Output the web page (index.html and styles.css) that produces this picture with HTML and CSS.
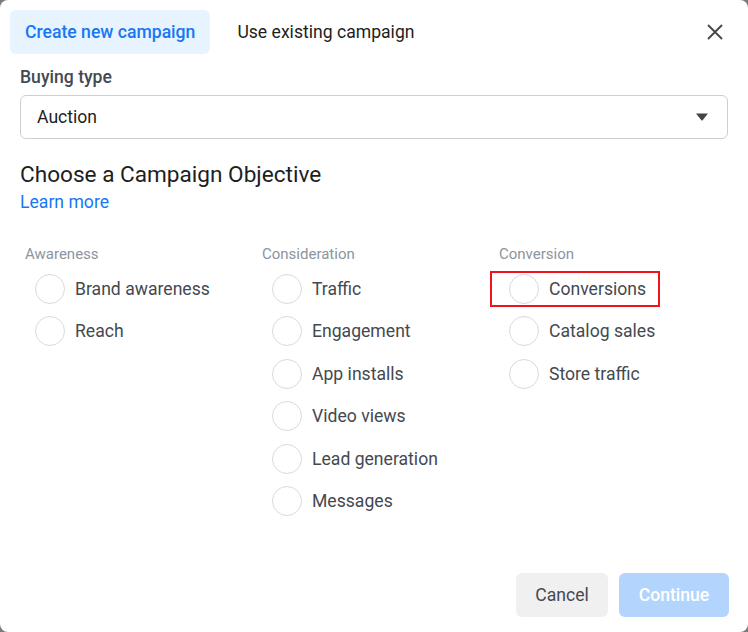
FILE: index.html
```html
<!DOCTYPE html>
<html lang="en">
<head>
    <meta charset="UTF-8">
    <title>Create campaign</title>
    <link rel="stylesheet" href="styles.css">
</head>
<body>
    <div class="dialog">
        <div class="tabs">
            <div class="tab active">Create new campaign</div>
            <div class="tab">Use existing campaign</div>
            <button class="close" aria-label="Close">
                <svg width="16" height="16" viewBox="0 0 16 16"><path d="M1.5 1.5L14.5 14.5M14.5 1.5L1.5 14.5" stroke="#444" stroke-width="1.8" stroke-linecap="round"/></svg>
            </button>
        </div>

        <div class="field-label">Buying type</div>
        <div class="select">
            <span>Auction</span>
            <svg width="12" height="8" viewBox="0 0 12 8"><path d="M0 0.5h12L6.8 7a1 1 0 0 1-1.6 0z" fill="#444"/></svg>
        </div>

        <h2 class="heading">Choose a Campaign Objective</h2>
        <a class="learn" href="#">Learn more</a>

        <div class="objectives">
            <div class="group">
                <div class="group-title">Awareness</div>
                <label class="option"><span class="radio"></span>Brand awareness</label>
                <label class="option"><span class="radio"></span>Reach</label>
            </div>
            <div class="group">
                <div class="group-title">Consideration</div>
                <label class="option"><span class="radio"></span>Traffic</label>
                <label class="option"><span class="radio"></span>Engagement</label>
                <label class="option"><span class="radio"></span>App installs</label>
                <label class="option"><span class="radio"></span>Video views</label>
                <label class="option"><span class="radio"></span>Lead generation</label>
                <label class="option"><span class="radio"></span>Messages</label>
            </div>
            <div class="group">
                <div class="group-title">Conversion</div>
                <label class="option marked"><span class="radio"></span>Conversions</label>
                <label class="option"><span class="radio"></span>Catalog sales</label>
                <label class="option"><span class="radio"></span>Store traffic</label>
            </div>
        </div>

        <div class="footer">
            <button class="btn cancel">Cancel</button>
            <button class="btn continue">Continue</button>
        </div>
    </div>
</body>
</html>
```

FILE: styles.css
```css
body {
    margin: 0;
    background: #7a7a7a;
    font-family: Roboto, "Liberation Sans", sans-serif;
    font-size: 17.6px;
    color: #444950;
}

.dialog {
    width: 748px;
    height: 632px;
    box-sizing: border-box;
    background: #fff;
    border-radius: 8px;
    padding: 10px 20px 0 20px;
    display: flex;
    flex-direction: column;
}

.tabs {
    display: flex;
    align-items: center;
    margin-left: -10px;
    height: 44px;
}

.tab {
    height: 44px;
    line-height: 44px;
    padding: 0 15px;
    color: #1c1e21;
    border-radius: 6px;
}

.tab.active {
    background: #e7f3ff;
    color: #1877f2;
    font-weight: 500;
}

.tab + .tab {
    margin-left: 12px;
}

.close {
    margin-left: auto;
    margin-right: 3px;
    border: 0;
    background: none;
    padding: 0;
    width: 20px;
    height: 20px;
    display: flex;
    align-items: center;
    justify-content: center;
}

.field-label {
    margin-top: 13px;
    font-weight: 500;
    color: #444950;
    line-height: 20px;
}

.select {
    margin-top: 8px;
    height: 44px;
    box-sizing: border-box;
    border: 1px solid #ccd0d5;
    border-radius: 6px;
    display: flex;
    align-items: center;
    justify-content: space-between;
    padding: 0 19px 0 16px;
    color: #1c1e21;
}

.heading {
    margin: 22px 0 0 0;
    font-size: 22.6px;
    font-weight: 400;
    line-height: 28px;
    color: #1c1e21;
}

.learn {
    display: block;
    margin-top: 2px;
    line-height: 22px;
    color: #1877f2;
    text-decoration: none;
}

.objectives {
    display: grid;
    grid-template-columns: 237px 237px 1fr;
    margin-top: 32px;
}

.group {
    padding-left: 5px;
}

.group-title {
    font-size: 15px;
    color: #8d949e;
    line-height: 18px;
    margin-bottom: 8px;
}

.option {
    display: flex;
    align-items: center;
    width: fit-content;
    height: 36px;
    box-sizing: border-box;
    margin: 0 0 6.4px 10px;
    color: #444950;
}

.radio {
    width: 28px;
    height: 28px;
    border: 1px solid #d8dadf;
    border-radius: 50%;
    margin-right: 10px;
}

/* highlighted objective */
.option.marked {
    border: 2px solid #f0131e;
    margin-left: -9px;
    padding: 0 12px 0 17px;
}

.footer {
    margin-top: auto;
    margin-bottom: 15px;
    display: flex;
    justify-content: flex-end;
    gap: 11px;
    margin-right: -1px;
}

.btn {
    height: 44px;
    border: 0;
    border-radius: 6px;
    font-family: inherit;
    font-size: 17.6px;
}

.cancel {
    width: 92px;
    background: #f0f0f0;
    color: #444950;
}

.continue {
    width: 110px;
    background: #b3d5fd;
    color: #fff;
    font-weight: 500;
}
```
